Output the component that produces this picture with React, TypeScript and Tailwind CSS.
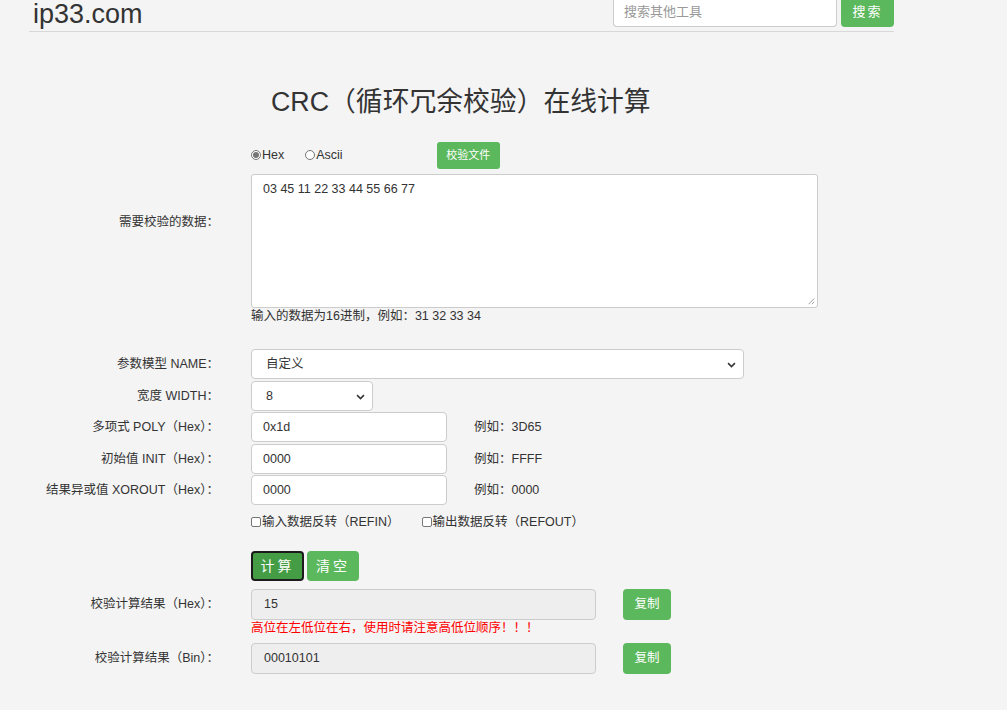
import { useState } from "react";

const font = { fontFamily: '"Liberation Sans", Arial, "Noto Sans CJK SC", sans-serif' };

const Row = ({ label, children, className = "" }: { label: string; children: React.ReactNode; className?: string }) => (
  <div className={`flex items-center ${className}`}>
    <div className="w-[219px] shrink-0 text-right text-[12.5px] text-[#333]">{label}</div>
    <div className="ml-[32px] flex items-center">{children}</div>
  </div>
);

const Chevron = () => (
  <svg viewBox="0 0 16 16" className="h-[11px] w-[11px]" fill="none" stroke="#333" strokeWidth="2.2">
    <path d="M3 6l5 5 5-5" />
  </svg>
);

export default function App() {
  const [hex, setHex] = useState(true);

  return (
    <div className="min-h-[710px] bg-[#f4f4f4] text-[#333]" style={font}>
      {/* header */}
      <div className="ml-[29px] flex h-[32px] w-[865px] items-end justify-between border-b border-[#d8d8d8]">
        <div className="mb-[2px] pl-[4px] text-[27px] leading-[30px] text-[#333]">ip33.com</div>
        <div className="mb-[4px] flex gap-[4px]">
          <div className="flex h-[30px] w-[224px] items-center rounded-b-[4px] border border-t-0 border-[#ccc] bg-white px-[10px] text-[13px] text-[#999]">
            搜索其他工具
          </div>
          <button className="h-[30px] w-[53px] rounded-b-[4px] bg-[#5cb85c] text-[13px] tracking-[2px] text-white">搜索</button>
        </div>
      </div>

      <h1 className="mt-[54px] ml-[271px] text-[26.8px] leading-[32px] text-[#333]">CRC（循环冗余校验）在线计算</h1>

      {/* data input */}
      <div className="mt-[23px] flex">
        <div className="w-[219px] shrink-0 pt-[72px] text-right text-[12.5px]">需要校验的数据：</div>
        <div className="ml-[32px]">
          <div className="flex h-[28px] items-center text-[12.5px]">
            <label className="flex items-center" onClick={() => setHex(true)}>
              <span className="flex h-[10px] w-[10px] items-center justify-center rounded-full border border-[#767676] bg-white">
                {hex && <span className="h-[6px] w-[6px] rounded-full bg-[#767676]" />}
              </span>
              <span className="ml-[1px]">Hex</span>
            </label>
            <label className="ml-[21px] flex items-center" onClick={() => setHex(false)}>
              <span className="flex h-[10px] w-[10px] items-center justify-center rounded-full border border-[#767676] bg-white">
                {!hex && <span className="h-[6px] w-[6px] rounded-full bg-[#767676]" />}
              </span>
              <span className="ml-[1px]">Ascii</span>
            </label>
            <button className="ml-[94px] h-[27px] w-[63px] rounded-[3px] bg-[#5cb85c] text-[11px] text-white">校验文件</button>
          </div>
          <div className="relative mt-[5px] h-[134px] w-[567px] rounded-[3px] border border-[#ccc] bg-white px-[11px] pt-[5px] text-[12.5px] leading-[18px] text-[#333]">
            03 45 11 22 33 44 55 66 77
            <svg viewBox="0 0 10 10" className="absolute right-[2px] bottom-[2px] h-[8px] w-[8px]" stroke="#888" strokeWidth="1">
              <path d="M9 2L2 9M9 6L6 9" />
            </svg>
          </div>
          <div className="mt-[1px] text-[12.5px] leading-[14px]">输入的数据为16进制，例如：31 32 33 34</div>
        </div>
      </div>

      {/* params */}
      <Row label="参数模型 NAME：" className="mt-[26px]">
        <div className="flex h-[30px] w-[493px] items-center justify-between rounded-[4px] border border-[#ccc] bg-white pr-[6px] pl-[14px] text-[12.5px]">
          <span>自定义</span>
          <Chevron />
        </div>
      </Row>
      <Row label="宽度 WIDTH：" className="mt-[2px]">
        <div className="flex h-[30px] w-[122px] items-center justify-between rounded-[4px] border border-[#ccc] bg-white pr-[6px] pl-[14px] text-[12.5px]">
          <span>8</span>
          <Chevron />
        </div>
      </Row>
      <Row label="多项式 POLY（Hex）：" className="mt-[1px]">
        <div className="flex h-[30px] w-[196px] items-center rounded-[4px] border border-[#ccc] bg-white px-[11px] text-[12.5px]">0x1d</div>
        <span className="ml-[27px] text-[12.5px]">例如：3D65</span>
      </Row>
      <Row label="初始值 INIT（Hex）：" className="mt-[2px]">
        <div className="flex h-[30px] w-[196px] items-center rounded-[4px] border border-[#ccc] bg-white px-[11px] text-[12.5px]">0000</div>
        <span className="ml-[27px] text-[12.5px]">例如：FFFF</span>
      </Row>
      <Row label="结果异或值 XOROUT（Hex）：" className="mt-[1px]">
        <div className="flex h-[30px] w-[196px] items-center rounded-[4px] border border-[#ccc] bg-white px-[11px] text-[12.5px]">0000</div>
        <span className="ml-[27px] text-[12.5px]">例如：0000</span>
      </Row>
      <Row label="" className="mt-[7px] h-[20px]">
        <label className="flex items-center text-[12.5px]">
          <span className="h-[10px] w-[10px] rounded-[2px] border border-[#767676] bg-white" />
          <span className="ml-[1px]">输入数据反转（REFIN）</span>
        </label>
        <label className="ml-[22px] flex items-center text-[12.5px]">
          <span className="h-[10px] w-[10px] rounded-[2px] border border-[#767676] bg-white" />
          <span className="ml-[1px]">输出数据反转（REFOUT）</span>
        </label>
      </Row>

      {/* actions */}
      <Row label="" className="mt-[19px]">
        <button className="h-[30px] w-[53px] rounded-[4px] border-2 border-[#1b1b1b] bg-[#449d44] text-[14px] tracking-[3px] text-white">计算</button>
        <button className="ml-[3px] h-[30px] w-[52px] rounded-[4px] bg-[#5cb85c] text-[14px] tracking-[3px] text-white">清空</button>
      </Row>

      <Row label="校验计算结果（Hex）：" className="mt-[8px]">
        <div className="flex h-[31px] w-[345px] items-center rounded-[4px] border border-[#ccc] bg-[#eeeeee] px-[12px] text-[12.5px]">15</div>
        <button className="ml-[27px] h-[31px] w-[48px] rounded-[4px] bg-[#5cb85c] text-[12.5px] text-white">复制</button>
      </Row>
      <Row label="" className="mt-[1px]">
        <span className="text-[12.5px] leading-[15px] text-[#ff0000]">高位在左低位在右，使用时请注意高低位顺序！！！</span>
      </Row>
      <Row label="校验计算结果（Bin）：" className="mt-[7px]">
        <div className="flex h-[31px] w-[345px] items-center rounded-[4px] border border-[#ccc] bg-[#eeeeee] px-[12px] text-[12.5px]">00010101</div>
        <button className="ml-[27px] h-[31px] w-[48px] rounded-[4px] bg-[#5cb85c] text-[12.5px] text-white">复制</button>
      </Row>
    </div>
  );
}
